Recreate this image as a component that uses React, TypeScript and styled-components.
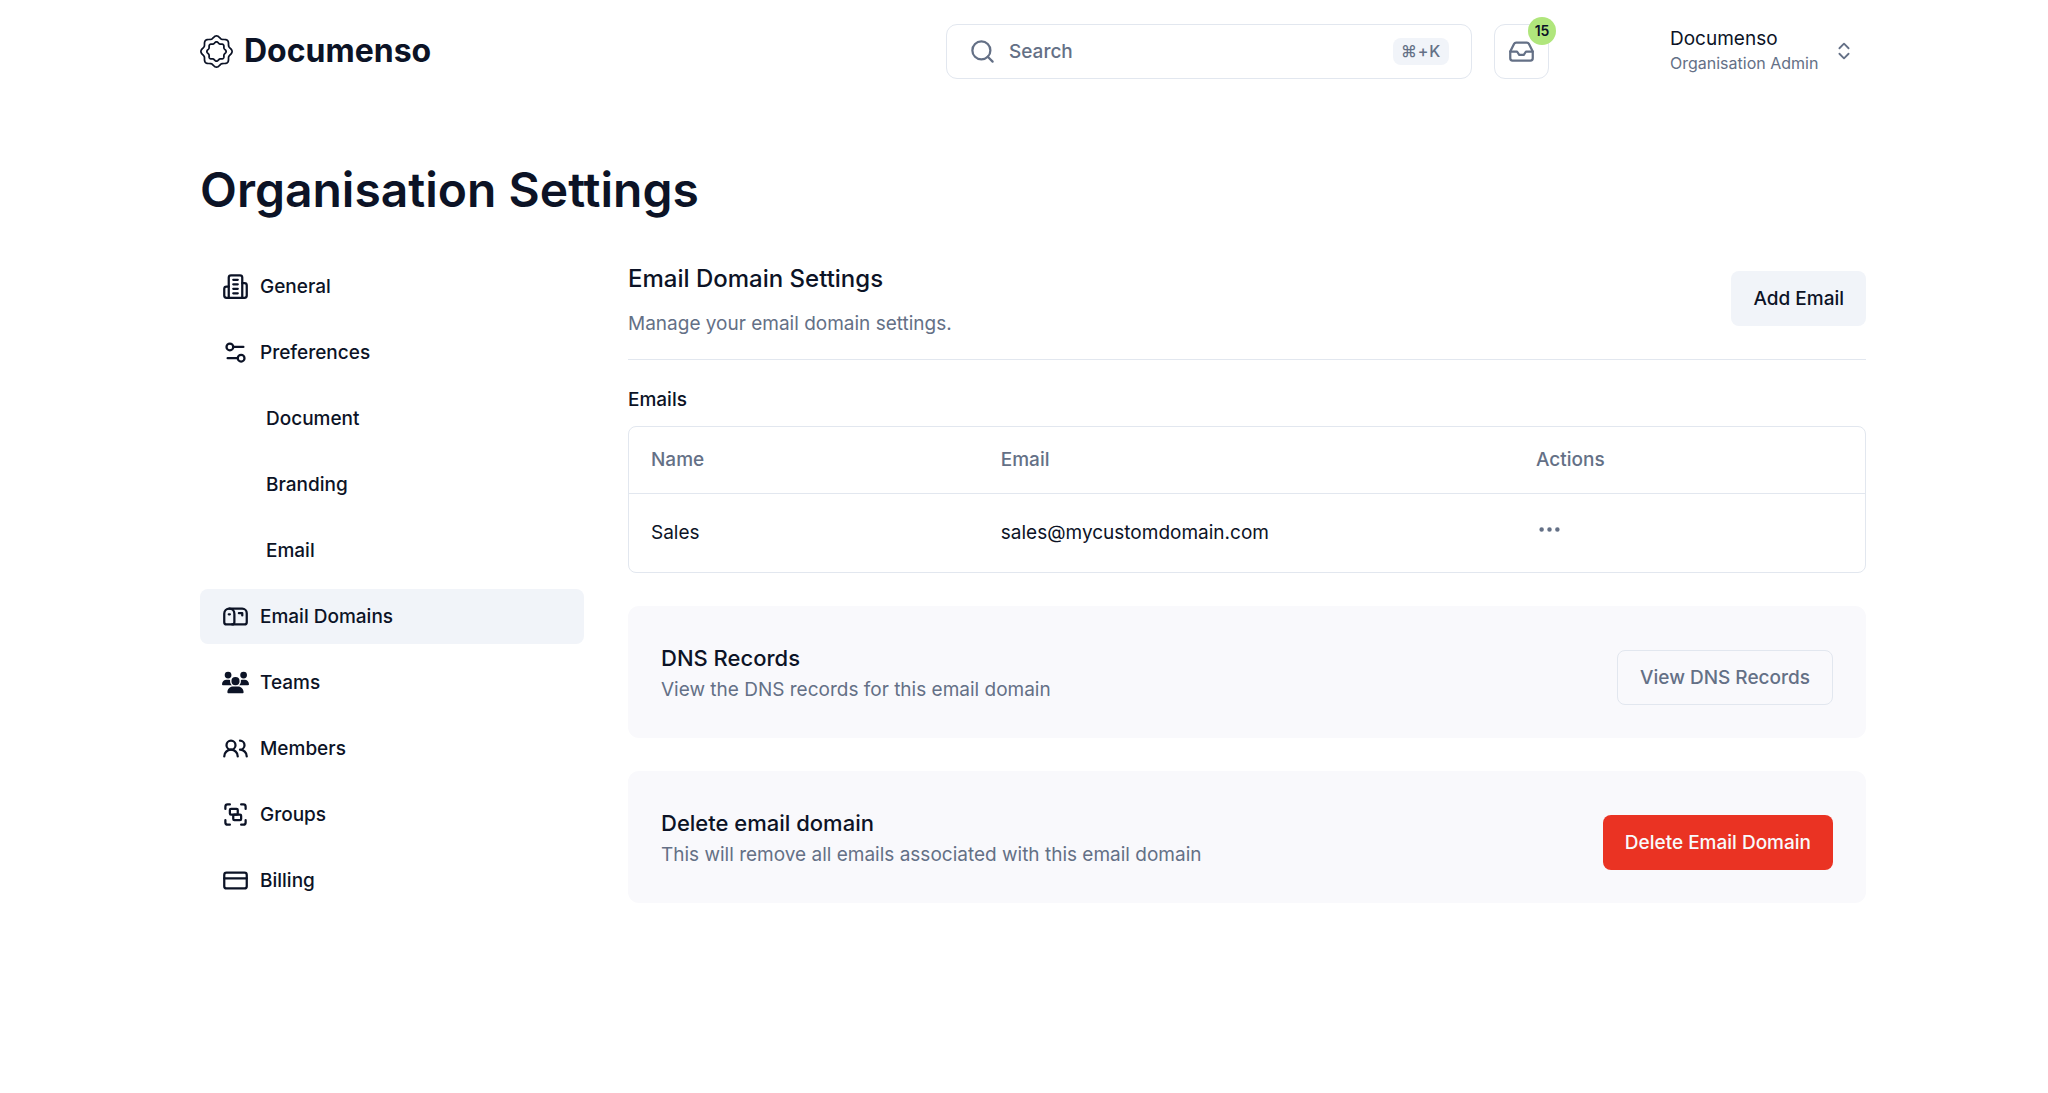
import React from 'react';
import styled, { createGlobalStyle, css } from 'styled-components';
import {
  ChevronsUpDown,
  CreditCard,
  Group,
  Inbox,
  Mailbox,
  MoreHorizontal,
  Search,
  Settings2,
} from 'lucide-react';
import { FaUsers } from 'react-icons/fa6';

const color = {
  ink: '#0c1326',
  muted: '#647086',
  border: '#e2e7ef',
  soft: '#f1f4f9',
  card: '#f9f9fc',
  danger: '#ea3323',
  badge: '#b0e67c',
};

const GlobalStyle = createGlobalStyle`
  *, *::before, *::after { box-sizing: border-box; }
  body {
    margin: 0;
    background: #fff;
    color: ${color.ink};
    font-family: Inter, "Liberation Sans", sans-serif;
    font-size: 19px;
    line-height: 27px;
  }
  button { font: inherit; color: inherit; cursor: pointer; }
  svg { display: block; flex-shrink: 0; }
`;

const Page = styled.div`
  padding: 0 182px 0 200px;
`;

const Header = styled.header`
  display: flex;
  align-items: center;
  height: 102px;
`;

const Brand = styled.a`
  display: flex;
  align-items: center;
  gap: 11px;
  margin-right: auto;
  color: inherit;
  text-decoration: none;
  font-size: 32px;
  line-height: 40px;
  font-weight: 700;
`;

const SearchButton = styled.button`
  display: flex;
  align-items: center;
  gap: 13px;
  width: 526px;
  height: 55px;
  padding: 0 22px;
  border: 1px solid ${color.border};
  border-radius: 11px;
  background: #fff;
  color: ${color.muted};
  font-weight: 500;
`;

const Shortcut = styled.kbd`
  margin-left: auto;
  padding: 0 8px;
  border-radius: 8px;
  background: ${color.soft};
  font-family: inherit;
  font-size: 16px;
  letter-spacing: 0.05em;
`;

const InboxButton = styled.button`
  position: relative;
  display: flex;
  align-items: center;
  justify-content: center;
  width: 55px;
  height: 55px;
  margin-left: 22px;
  padding: 0;
  border: 1px solid ${color.border};
  border-radius: 11px;
  background: #fff;
  color: ${color.muted};
`;

const Badge = styled.span`
  position: absolute;
  top: -8px;
  right: -8px;
  width: 28px;
  height: 28px;
  border-radius: 50%;
  background: ${color.badge};
  color: ${color.ink};
  font-size: 14px;
  line-height: 28px;
  font-weight: 600;
  text-align: center;
`;

const AccountButton = styled.button`
  display: flex;
  align-items: center;
  justify-content: space-between;
  width: 317px;
  padding: 0 11px 0 121px;
  border: 0;
  background: none;
  text-align: left;
`;

const AccountText = styled.span`
  display: flex;
  flex-direction: column;
  line-height: 24px;
`;

const AccountRole = styled.span`
  color: ${color.muted};
  font-size: 16px;
`;

const Title = styled.h1`
  margin: 58px 0 0;
  font-size: 48px;
  line-height: 60px;
  font-weight: 600;
`;

const Layout = styled.div`
  display: grid;
  grid-template-columns: 384px minmax(0, 1fr);
  gap: 44px;
  margin-top: 39px;
`;

const Nav = styled.nav`
  display: flex;
  flex-direction: column;
  gap: 11px;
`;

const NavLink = styled.a<{ $nested?: boolean; $active?: boolean }>`
  display: flex;
  align-items: center;
  gap: 11px;
  height: 55px;
  padding-left: ${(p) => (p.$nested ? 66 : 22)}px;
  border-radius: 8px;
  background: ${(p) => (p.$active ? color.soft : 'transparent')};
  color: inherit;
  font-weight: 500;
  text-decoration: none;
`;

const Main = styled.main`
  display: flex;
  flex-direction: column;
`;

const SectionHeader = styled.div`
  display: flex;
  justify-content: space-between;
  align-items: center;
  padding-bottom: 22px;
  border-bottom: 1px solid ${color.border};
`;

const SectionTitle = styled.h2`
  margin: 0;
  font-size: 24px;
  line-height: 40px;
  font-weight: 500;
`;

const Description = styled.p`
  margin: 0;
  color: ${color.muted};
`;

const SectionDescription = styled(Description)`
  margin-top: 11px;
`;

const Button = styled.button<{ $variant: 'secondary' | 'outline' | 'danger' }>`
  height: 55px;
  padding: 0 22px;
  border: 0;
  border-radius: 8px;
  font-weight: 500;
  white-space: nowrap;
  ${(p) =>
    p.$variant === 'secondary' &&
    css`
      background: ${color.soft};
    `}
  ${(p) =>
    p.$variant === 'outline' &&
    css`
      border: 1px solid ${color.border};
      background: transparent;
      color: ${color.muted};
    `}
  ${(p) =>
    p.$variant === 'danger' &&
    css`
      background: ${color.danger};
      color: #f8fafc;
    `}
`;

const TableLabel = styled.h3`
  margin: 26px 0 13px;
  font-size: 19px;
  line-height: 27px;
  font-weight: 500;
`;

const TableFrame = styled.div`
  overflow: hidden;
  border: 1px solid ${color.border};
  border-radius: 8px;
`;

const Table = styled.table`
  width: 100%;
  table-layout: fixed;
  border-collapse: collapse;
  text-align: left;
`;

const Column = styled.col<{ $share: number }>`
  width: ${(p) => p.$share}%;
`;

const HeadCell = styled.th`
  height: 66px;
  padding: 0 22px;
  border-bottom: 1px solid ${color.border};
  color: ${color.muted};
  font-weight: 500;
`;

const Cell = styled.td`
  height: 79px;
  padding: 0 22px;
`;

const MenuButton = styled.button`
  padding: 0;
  border: 0;
  background: none;
  color: ${color.muted};
  vertical-align: baseline;
`;

const Card = styled.section`
  display: flex;
  align-items: flex-end;
  justify-content: space-between;
  min-height: 132px;
  margin-top: 33px;
  padding: 33px;
  border-radius: 11px;
  background: ${color.card};
`;

const CardText = styled.div`
  padding-bottom: 2px;
`;

const CardTitle = styled.h3`
  margin: 0 0 4px;
  font-size: 22px;
  line-height: 27px;
  font-weight: 500;
`;

/* Rosette outline: a circle whose radius swells and dips eight times. */
const rosette = (radius: number, depth: number) => {
  const steps = 128;
  const points = Array.from({ length: steps }, (_, i) => {
    const t = (i / steps) * Math.PI * 2;
    const r = radius + depth * Math.cos(8 * t);
    return `${(20 + r * Math.cos(t)).toFixed(2)} ${(20 + r * Math.sin(t)).toFixed(2)}`;
  });
  return `M${points.join('L')}Z`;
};

const LogoMark = () => (
  <svg width="33" height="33" viewBox="0 0 40 40" fill="none" stroke="currentColor" strokeWidth="2.1" strokeLinejoin="round" aria-hidden="true">
    <path d={rosette(17.5, 1.4)} />
    <path d={rosette(10.8, 0.9)} />
  </svg>
);

const BuildingIcon = ({ size }: { size: number }) => (
  <svg width={size} height={size} viewBox="0 0 24 24" fill="none" stroke="currentColor" strokeWidth="2" strokeLinecap="round" strokeLinejoin="round" aria-hidden="true">
    <path d="M6 22V4a2 2 0 0 1 2-2h8a2 2 0 0 1 2 2v18Z" />
    <path d="M6 12H4a2 2 0 0 0-2 2v6a2 2 0 0 0 2 2h2" />
    <path d="M18 9h2a2 2 0 0 1 2 2v9a2 2 0 0 1-2 2h-2" />
    <path d="M10 6h4" />
    <path d="M10 10h4" />
    <path d="M10 14h4" />
    <path d="M10 18h4" />
  </svg>
);

const MembersIcon = ({ size }: { size: number }) => (
  <svg width={size} height={size} viewBox="0 0 24 24" fill="none" stroke="currentColor" strokeWidth="2" strokeLinecap="round" strokeLinejoin="round" aria-hidden="true">
    <path d="M14 19a6 6 0 0 0-12 0" />
    <circle cx="8" cy="9" r="4" />
    <path d="M22 19a6 6 0 0 0-6-6 4 4 0 1 0 0-8" />
  </svg>
);

type NavItem = {
  label: string;
  icon?: React.ComponentType<{ size: number }>;
  active?: boolean;
};

const navItems: NavItem[] = [
  { label: 'General', icon: BuildingIcon },
  { label: 'Preferences', icon: Settings2 },
  { label: 'Document' },
  { label: 'Branding' },
  { label: 'Email' },
  { label: 'Email Domains', icon: Mailbox, active: true },
  { label: 'Teams', icon: FaUsers },
  { label: 'Members', icon: MembersIcon },
  { label: 'Groups', icon: Group },
  { label: 'Billing', icon: CreditCard },
];

const emails = [{ name: 'Sales', address: 'sales@mycustomdomain.com' }];

export default function App() {
  return (
    <>
      <GlobalStyle />
      <Page>
        <Header>
          <Brand href="#">
            <LogoMark />
            Documenso
          </Brand>
          <SearchButton type="button">
            <Search size={27} strokeWidth={2} />
            Search
            <Shortcut>⌘+K</Shortcut>
          </SearchButton>
          <InboxButton type="button" aria-label="Inbox">
            <Inbox size={27} />
            <Badge>15</Badge>
          </InboxButton>
          <AccountButton type="button">
            <AccountText>
              Documenso
              <AccountRole>Organisation Admin</AccountRole>
            </AccountText>
            <ChevronsUpDown size={22} color={color.muted} />
          </AccountButton>
        </Header>

        <Title>Organisation Settings</Title>

        <Layout>
          <Nav>
            {navItems.map(({ label, icon: Icon, active }) => (
              <NavLink key={label} href="#" $nested={!Icon} $active={active} aria-current={active ? 'page' : undefined}>
                {Icon && <Icon size={27} />}
                {label}
              </NavLink>
            ))}
          </Nav>

          <Main>
            <SectionHeader>
              <div>
                <SectionTitle>Email Domain Settings</SectionTitle>
                <SectionDescription>Manage your email domain settings.</SectionDescription>
              </div>
              <Button type="button" $variant="secondary">Add Email</Button>
            </SectionHeader>

            <TableLabel>Emails</TableLabel>
            <TableFrame>
              <Table>
                <colgroup>
                  <Column $share={28.3} />
                  <Column $share={43.3} />
                  <Column $share={28.4} />
                </colgroup>
                <thead>
                  <tr>
                    <HeadCell scope="col">Name</HeadCell>
                    <HeadCell scope="col">Email</HeadCell>
                    <HeadCell scope="col">Actions</HeadCell>
                  </tr>
                </thead>
                <tbody>
                  {emails.map((email) => (
                    <tr key={email.address}>
                      <Cell>{email.name}</Cell>
                      <Cell>{email.address}</Cell>
                      <Cell>
                        <MenuButton type="button" aria-label="Email actions">
                          <MoreHorizontal size={27} />
                        </MenuButton>
                      </Cell>
                    </tr>
                  ))}
                </tbody>
              </Table>
            </TableFrame>

            <Card>
              <CardText>
                <CardTitle>DNS Records</CardTitle>
                <Description>View the DNS records for this email domain</Description>
              </CardText>
              <Button type="button" $variant="outline">View DNS Records</Button>
            </Card>

            <Card>
              <CardText>
                <CardTitle>Delete email domain</CardTitle>
                <Description>This will remove all emails associated with this email domain</Description>
              </CardText>
              <Button type="button" $variant="danger">Delete Email Domain</Button>
            </Card>
          </Main>
        </Layout>
      </Page>
    </>
  );
}
